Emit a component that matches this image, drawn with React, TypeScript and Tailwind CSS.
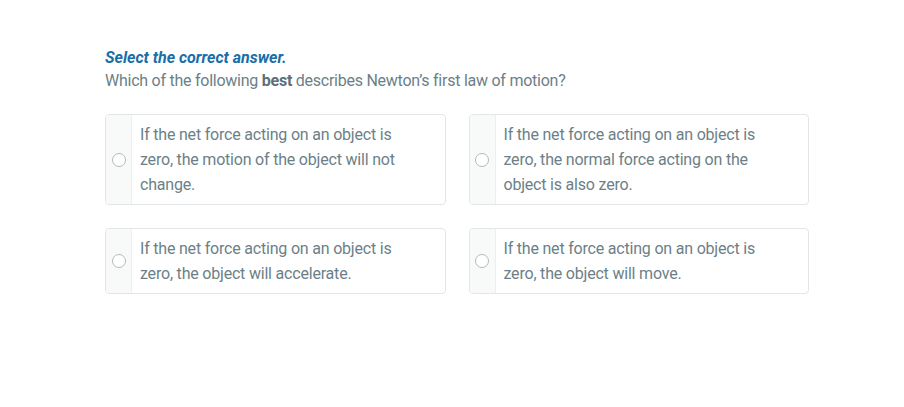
const options = [
  'If the net force acting on an object is zero, the motion of the object will not change.',
  'If the net force acting on an object is zero, the normal force acting on the object is also zero.',
  'If the net force acting on an object is zero, the object will accelerate.',
  'If the net force acting on an object is zero, the object will move.',
]

function Option({ text }: { text: string }) {
  return (
    <label className="flex cursor-pointer overflow-hidden rounded border border-[#e3e6e8] bg-white">
      <div className="flex w-[26px] shrink-0 items-center justify-center border-r border-[#eceeef] bg-[#f8f9f9]">
        <span className="block h-[14px] w-[14px] rounded-full border border-[#b5b9bc] bg-white" />
      </div>
      <div className="py-[7px] pl-[8px] pr-[30px] text-[16px] leading-[25px] tracking-[-0.2px] text-[#6c7f88]">{text}</div>
    </label>
  )
}

export default function App() {
  return (
    <div className="min-h-[407px] bg-white" style={{ fontFamily: 'Roboto, "Liberation Sans", sans-serif' }}>
      <div className="ml-[105px] w-[704px] pt-[47px]">
        <p className="text-[16px] font-bold italic leading-[22px] text-[#1a6ea8]">Select the correct answer.</p>
        <p className="text-[16px] leading-[24px] tracking-[-0.25px] text-[#6c7f88]">
          Which of the following <b className="font-bold text-[#5d6f78]">best</b> describes Newton’s first law of motion?
        </p>
        <div className="mt-[21px] grid grid-cols-2 gap-x-[23px] gap-y-[23px]">
          {options.map((o) => (
            <Option key={o} text={o} />
          ))}
        </div>
      </div>
    </div>
  )
}
